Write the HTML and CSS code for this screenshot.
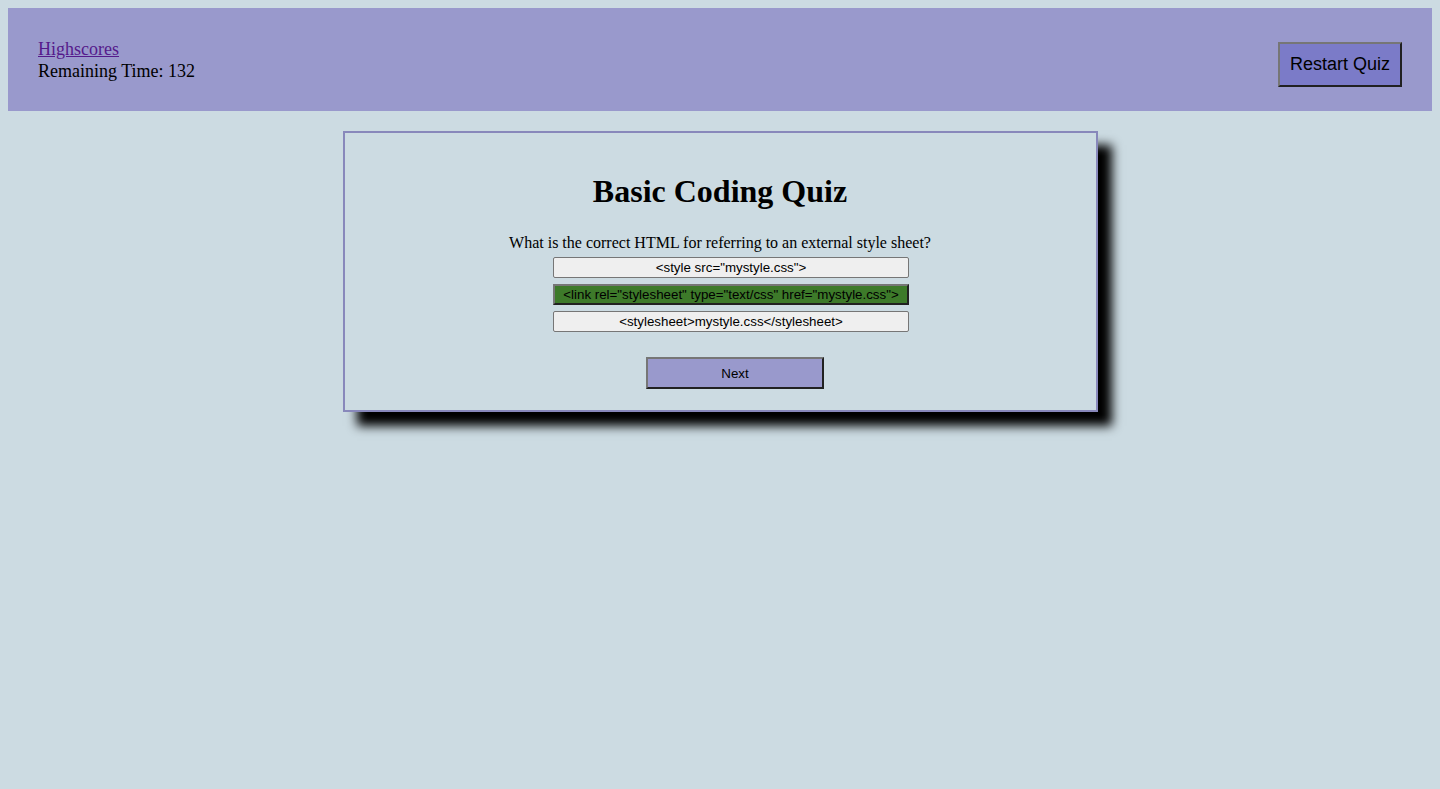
FILE: index.html
```html
<!DOCTYPE html>
<html>
<head>
<meta charset="utf-8">
<link rel="stylesheet" href="styles.css">
</head>
<body>
<header class="topbar">
  <div class="status">
    <a href="#" class="scores-link">Highscores</a>
    <div class="timer">Remaining Time: 132</div>
  </div>
  <button class="restart-btn">Restart Quiz</button>
</header>
<main class="quiz-card">
  <h1 class="quiz-title">Basic Coding Quiz</h1>
  <p class="question">What is the correct HTML for referring to an external style sheet?</p>
  <div class="answers">
    <button class="answer">&lt;style src="mystyle.css"&gt;</button>
    <button class="answer correct">&lt;link rel="stylesheet" type="text/css" href="mystyle.css"&gt;</button>
    <button class="answer">&lt;stylesheet&gt;mystyle.css&lt;/stylesheet&gt;</button>
  </div>
  <button class="next-btn">Next</button>
</main>
</body>
</html>
```
FILE: styles.css
```css
html {
  background: #ccdbe2;
  min-height: 100%;
}
body {
  margin: 8px;
  min-height: calc(100vh - 16px);
  font-family: "Liberation Serif", "Times New Roman", serif;
  font-size: 16px;
  color: #000;
}
.topbar {
  background: #9999cc;
  height: 103px;
  box-sizing: border-box;
  padding: 0 30px;
  display: flex;
  align-items: center;
  justify-content: space-between;
}
.status {
  font-size: 18px;
  line-height: 22px;
  margin-top: 0;
}
.scores-link {
  color: #551a8b;
  text-decoration: underline;
}
.restart-btn {
  font-family: "Liberation Sans", Arial, sans-serif;
  font-size: 18px;
  background: #7b7bc8;
  color: #000;
  border: 2px outset #767676;
  width: 124px;
  height: 45px;
  padding: 0;
  margin-top: 9px;
}
.quiz-card {
  width: 755px;
  box-sizing: border-box;
  margin: 20px auto 0;
  border: 2px solid #8888bb;
  box-shadow: 14px 14px 10px #000;
  display: flex;
  flex-direction: column;
  align-items: center;
  padding: 0 0 21px;
}
.quiz-title {
  font-size: 32px;
  font-weight: bold;
  margin: 40px 0 0;
  line-height: 37px;
}
.question {
  margin: 24px 0 0;
  line-height: 18px;
}
.answers {
  display: flex;
  flex-direction: column;
  gap: 6px;
  margin: 5px 0 0 22px;
}
.answer {
  width: 356px;
  height: 21px;
  padding: 0;
  font-family: "Liberation Sans", Arial, sans-serif;
  font-size: 13.333px;
  background: #efefef;
  color: #000;
  border: 1px solid #767676;
  border-radius: 2px;
}
.answer.correct {
  background: #3d7a2a;
  border: 2px outset #767676;
  border-radius: 0;
}
.next-btn {
  margin: 25px 0 0 30px;
  width: 178px;
  height: 32px;
  padding: 0;
  font-family: "Liberation Sans", Arial, sans-serif;
  font-size: 13.333px;
  background: #9999cc;
  color: #000;
  border: 2px outset #767676;
}
```
